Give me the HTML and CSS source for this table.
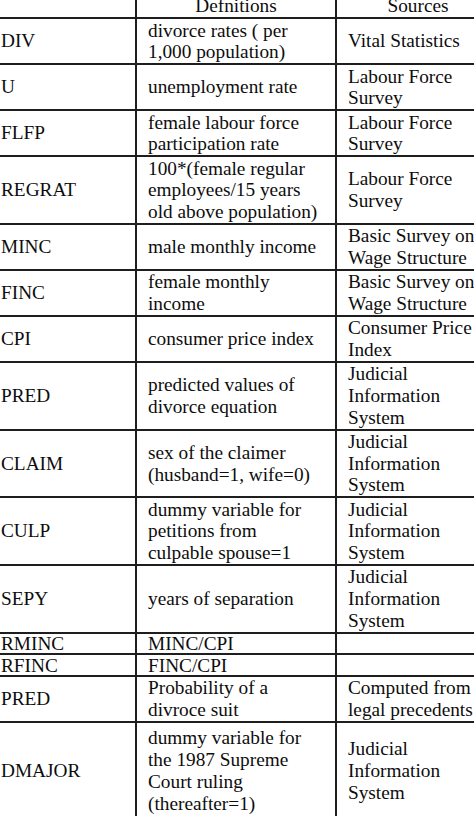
FILE: index.html
```html
<!DOCTYPE html>
<html>
<head>
<meta charset="utf-8">
<link rel="stylesheet" href="styles.css">
</head>
<body>
<table class="vars">
  <colgroup>
    <col class="c-name">
    <col class="c-def">
    <col class="c-src">
  </colgroup>
  <thead>
    <tr><th></th><th>Defnitions</th><th>Sources</th></tr>
  </thead>
  <tbody>
    <tr><td>DIV</td><td>divorce rates ( per<br>1,000 population)</td><td>Vital Statistics</td></tr>
    <tr><td>U</td><td>unemployment rate</td><td>Labour Force<br>Survey</td></tr>
    <tr><td>FLFP</td><td>female labour force<br>participation rate</td><td>Labour Force<br>Survey</td></tr>
    <tr><td>REGRAT</td><td>100*(female regular<br>employees/15 years<br>old above population)</td><td>Labour Force<br>Survey</td></tr>
    <tr><td>MINC</td><td>male monthly income</td><td>Basic Survey on<br>Wage Structure</td></tr>
    <tr><td>FINC</td><td>female monthly<br>income</td><td>Basic Survey on<br>Wage Structure</td></tr>
    <tr><td>CPI</td><td>consumer price index</td><td>Consumer Price<br>Index</td></tr>
    <tr><td>PRED</td><td>predicted values of<br>divorce equation</td><td>Judicial<br>Information<br>System</td></tr>
    <tr><td>CLAIM</td><td>sex of the claimer<br>(husband=1, wife=0)</td><td>Judicial<br>Information<br>System</td></tr>
    <tr><td>CULP</td><td>dummy variable for<br>petitions from<br>culpable spouse=1</td><td>Judicial<br>Information<br>System</td></tr>
    <tr><td>SEPY</td><td>years of separation</td><td>Judicial<br>Information<br>System</td></tr>
    <tr class="tight"><td>RMINC</td><td>MINC/CPI</td><td></td></tr>
    <tr class="tight"><td>RFINC</td><td>FINC/CPI</td><td></td></tr>
    <tr><td>PRED</td><td>Probability of a<br>divroce suit</td><td>Computed from<br>legal precedents</td></tr>
    <tr class="last"><td>DMAJOR</td><td>dummy variable for<br>the 1987 Supreme<br>Court ruling<br>(thereafter=1)</td><td>Judicial<br>Information<br>System</td></tr>
  </tbody>
</table>
</body>
</html>
```

FILE: styles.css
```css
html, body {
  margin: 0;
  padding: 0;
  overflow: hidden;
  background: #ffffff;
}

body {
  width: 474px;
  height: 816px;
}

.vars {
  border-collapse: collapse;
  table-layout: fixed;
  width: 511px;
  margin-top: -7px;
  margin-left: -12px;
  font-family: "Liberation Serif", "Times New Roman", serif;
  font-size: 19.3px;
  line-height: 21.7px;
  color: #0d0d0d;
}

.c-name { width: 147px; }
.c-def { width: 200px; }
.c-src { width: 164px; }

.vars th,
.vars td {
  border: 2px solid #1e1e1e;
  padding: 0.3px 0 0.3px 11px;
  vertical-align: middle;
  white-space: nowrap;
  text-align: left;
  overflow: visible;
}

.vars th {
  font-weight: normal;
  text-align: center;
  padding-left: 0;
}

.vars tr.tight td {
  line-height: 19px;
}

.vars tr.last td {
  line-height: 22px;
  padding-top: 3.5px;
  padding-bottom: 3.5px;
}
```
